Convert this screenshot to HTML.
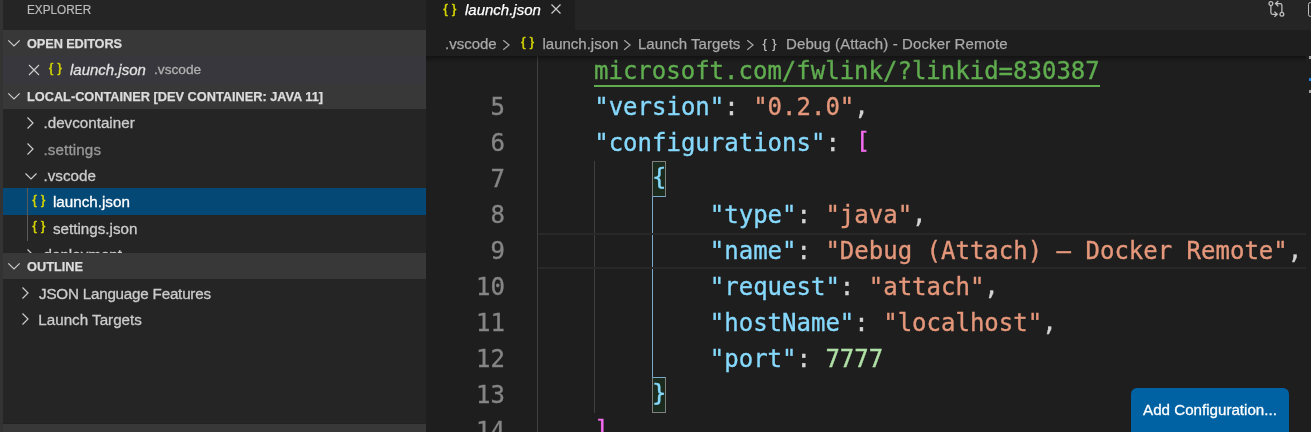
<!DOCTYPE html>
<html>
<head>
<meta charset="utf-8">
<title>launch.json</title>
<style>
html,body{margin:0;padding:0;}
body{width:1311px;height:432px;overflow:hidden;background:#1e1e1e;position:relative;font-family:"Liberation Sans",sans-serif;font-size:15px;color:#cccccc;}
.abs{position:absolute;}
#sidebar,#editor{will-change:transform;}
#activity{left:0;top:0;width:3px;height:432px;background:#333333;}
#sidebar{left:3px;top:0;width:423px;height:432px;background:#252526;overflow:hidden;}
.hdr{position:absolute;left:0;width:423px;height:26.4px;background:#383838;color:#dcdcdc;font-weight:bold;font-size:12.75px;line-height:27px;-webkit-text-stroke:0.25px #dcdcdc;white-space:nowrap;}
.hdr span{position:absolute;left:24px;top:0;}
.row{position:absolute;left:0;width:423px;height:26.4px;line-height:28px;font-size:15.2px;white-space:nowrap;color:#cccccc;}
.row span{position:absolute;top:0;-webkit-text-stroke:0.3px;}
.chev{position:absolute;}
.json{color:#d6d600;font-weight:normal;font-size:12.7px;letter-spacing:4.15px;margin-top:-2.6px;-webkit-text-stroke:0.55px #d6d600 !important;}
#editor{left:426px;top:0;width:885px;height:432px;background:#1e1e1e;overflow:hidden;}
#tabbar{left:0;top:0;width:885px;height:30px;background:#252526;}
#tab{left:0;top:0;width:149px;height:30px;background:#1e1e1e;}
#crumbs{left:0;top:30px;width:885px;height:26px;background:#1e1e1e;color:#a9a9a9;white-space:nowrap;line-height:26px;}
#crumbs span{position:absolute;top:1px;-webkit-text-stroke:0.25px;}
.code{position:absolute;left:0;width:885px;height:36px;line-height:36px;font-family:"DejaVu Sans Mono","Liberation Mono",monospace;font-size:24px;white-space:pre;}
.ln{position:absolute;left:0px;top:-0.2px;width:79px;-webkit-text-stroke:0.35px #858585;text-align:right;color:#858585;}
.tx{position:absolute;left:110.4px;top:0px;color:#d4d4d4;-webkit-text-stroke:0.35px;}
.k{color:#86d9fd;}
.s{color:#e4977a;}
.n{color:#b0e0a6;}
.b1{color:#f56cf0;}
.br{display:inline-block;transform:translateY(-1.1px) scaleY(0.94);}
.bo{transform:translate(1.4px,-1.1px) scaleY(0.94);}
.guide{position:absolute;width:1px;background:#404040;}
</style>
</head>
<body>
<div id="activity" class="abs"></div>

<div id="sidebar" class="abs">
  <div class="abs" style="left:24px;top:0;height:20px;line-height:20px;font-size:13.2px;color:#bbbbbb;white-space:nowrap;transform-origin:0 50%;transform:scaleX(0.893);-webkit-text-stroke:0.2px;">EXPLORER</div>

  <div class="hdr" style="top:30px;"><svg class="chev" style="left:3.2px;top:5px" width="16" height="16" viewBox="0 0 16 16"><path d="M2.3 5.3 L8 11 L13.7 5.3" fill="none" stroke="#cccccc" stroke-width="1.2"/></svg><span style="letter-spacing:-0.1px;">OPEN EDITORS</span></div>

  <div class="row" style="top:56.4px;background:#37373d;">
    <svg class="chev" style="left:24px;top:7px" width="14" height="14" viewBox="0 0 14 14"><path d="M2 2 L12 12 M12 2 L2 12" fill="none" stroke="#cccccc" stroke-width="1.2"/></svg>
    <span class="json" style="left:46.1px;">{}</span>
    <span style="left:67px;font-style:italic;color:#e0e0e0;font-size:15px;">launch.json</span>
    <span style="left:151px;font-size:13.7px;color:#b0b0b0;">.vscode</span>
  </div>

  <div class="hdr" style="top:82.8px;"><svg class="chev" style="left:3.2px;top:5px" width="16" height="16" viewBox="0 0 16 16"><path d="M2.3 5.3 L8 11 L13.7 5.3" fill="none" stroke="#cccccc" stroke-width="1.2"/></svg><span>LOCAL-CONTAINER [DEV CONTAINER: JAVA 11]</span></div>

  <div class="row" style="top:109.2px;">
    <svg class="chev" style="left:19.2px;top:5.6px" width="16" height="16" viewBox="0 0 16 16"><path d="M5.5 2.5 L11 8 L5.5 13.5" fill="none" stroke="#cccccc" stroke-width="1.2"/></svg>
    <span style="left:40.5px;">.devcontainer</span>
  </div>
  <div class="row" style="top:135.6px;">
    <svg class="chev" style="left:19.2px;top:5.6px" width="16" height="16" viewBox="0 0 16 16"><path d="M5.5 2.5 L11 8 L5.5 13.5" fill="none" stroke="#cccccc" stroke-width="1.2"/></svg>
    <span style="left:40.5px;color:#999999;letter-spacing:0.12px;">.settings</span>
  </div>
  <div class="row" style="top:162px;">
    <svg class="chev" style="left:19.6px;top:5.6px" width="16" height="16" viewBox="0 0 16 16"><path d="M2.5 5.5 L8 11 L13.5 5.5" fill="none" stroke="#cccccc" stroke-width="1.2"/></svg>
    <span style="left:40.5px;">.vscode</span>
  </div>
  <div class="row" style="top:188.4px;background:#044876;">
    <span class="json" style="left:29.6px;">{}</span>
    <span style="left:50px;color:#ffffff;">launch.json</span>
  </div>
  <div class="row" style="top:214.8px;">
    <span class="json" style="left:29.6px;">{}</span>
    <span style="left:50px;">settings.json</span>
  </div>
  <div class="row" style="top:241.2px;">
    <svg class="chev" style="left:19.2px;top:5.6px" width="16" height="16" viewBox="0 0 16 16"><path d="M5.5 2.5 L11 8 L5.5 13.5" fill="none" stroke="#cccccc" stroke-width="1.2"/></svg>
    <span style="left:40.5px;">deployment</span>
  </div>
  <div class="abs" style="left:24.4px;top:188.4px;width:1px;height:52.8px;background:#5a5a5a;"></div>

  <div class="hdr" style="top:253px;"><svg class="chev" style="left:3.2px;top:5px" width="16" height="16" viewBox="0 0 16 16"><path d="M2.3 5.3 L8 11 L13.7 5.3" fill="none" stroke="#cccccc" stroke-width="1.2"/></svg><span>OUTLINE</span></div>

  <div class="row" style="top:279.6px;">
    <svg class="chev" style="left:14px;top:5px" width="16" height="16" viewBox="0 0 16 16"><path d="M5.5 2.5 L11 8 L5.5 13.5" fill="none" stroke="#cccccc" stroke-width="1.2"/></svg>
    <span style="left:36px;letter-spacing:-0.21px;">JSON Language Features</span>
  </div>
  <div class="row" style="top:306px;">
    <svg class="chev" style="left:14px;top:5px" width="16" height="16" viewBox="0 0 16 16"><path d="M5.5 2.5 L11 8 L5.5 13.5" fill="none" stroke="#cccccc" stroke-width="1.2"/></svg>
    <span style="left:35.3px;">Launch Targets</span>
  </div>

  <div class="abs" style="left:0;top:422.8px;width:423px;height:1px;background:#222223;"></div>
  <div class="abs" style="left:0;top:423.7px;width:423px;height:9px;background:#383838;"></div>
</div>

<div id="editor" class="abs">
  <!-- code area -->
  <div id="code" class="abs" style="left:0;top:0;width:885px;height:432px;">
    <div class="guide" style="left:111px;top:53px;height:379px;"></div>
    <div class="guide" style="left:168px;top:161px;height:252px;"></div>
    <div class="guide" style="left:226px;top:196px;height:182px;background:#78aacb;"></div>
    <div class="abs" style="left:112px;top:233px;width:768px;height:32px;border-top:2px solid #282828;border-bottom:2px solid #282828;"></div>
    <div class="abs" style="left:226px;top:161px;width:14px;height:36px;background:#1a2a1c;border:1px solid #808080;border-bottom-color:#78aacb;box-sizing:border-box;"></div>
    <div class="abs" style="left:226px;top:377px;width:14px;height:36px;background:#1a2a1c;border:1px solid #808080;border-top-color:#78aacb;box-sizing:border-box;"></div>

    <div class="abs" style="left:168px;top:85px;width:506px;height:2px;background:#60ad50;"></div>
    <div class="code" style="top:53px;"><span class="tx" style="left:168px;color:#60ad50;">microsoft.com/fwlink/?linkid=830387</span></div>
    <div class="code" style="top:89px;"><span class="ln">5</span><span class="tx">    <span class="k">"version"</span>: <span class="s">"0.2.0"</span>,</span></div>
    <div class="code" style="top:125px;"><span class="ln">6</span><span class="tx">    <span class="k">"configurations"</span>: <span class="b1 br bo">[</span></span></div>
    <div class="code" style="top:161px;"><span class="ln">7</span><span class="tx">        <span class="k br">{</span></span></div>
    <div class="code" style="top:197px;"><span class="ln">8</span><span class="tx">            <span class="k">"type"</span>: <span class="s">"java"</span>,</span></div>
    <div class="code" style="top:233px;"><span class="ln">9</span><span class="tx">            <span class="k">"name"</span>: <span class="s">"Debug (Attach) – Docker Remote"</span>,</span></div>
    <div class="code" style="top:269px;"><span class="ln">10</span><span class="tx">            <span class="k">"request"</span>: <span class="s">"attach"</span>,</span></div>
    <div class="code" style="top:305px;"><span class="ln">11</span><span class="tx">            <span class="k">"hostName"</span>: <span class="s">"localhost"</span>,</span></div>
    <div class="code" style="top:341px;"><span class="ln">12</span><span class="tx">            <span class="k">"port"</span>: <span class="n">7777</span></span></div>
    <div class="code" style="top:377px;"><span class="ln">13</span><span class="tx">        <span class="k br">}</span></span></div>
    <div class="code" style="top:413px;"><span class="ln">14</span><span class="tx">    <span class="b1 br">]</span></span></div>
  </div>

  <div id="tabbar" class="abs">
    <div id="tab" class="abs">
      <span class="abs json" style="left:17.5px;top:1.5px;line-height:20px;">{}</span>
      <span class="abs" style="left:39px;top:0;line-height:20px;font-style:italic;color:#ffffff;white-space:nowrap;-webkit-text-stroke:0.25px;">launch.json</span>
      <svg class="abs" style="left:122.8px;top:2px" width="14" height="14" viewBox="0 0 14 14"><path d="M2.5 2.5 L11.5 11.5 M11.5 2.5 L2.5 11.5" fill="none" stroke="#cccccc" stroke-width="1.2"/></svg>
    </div>
    <svg class="abs" style="left:840px;top:0px" width="22" height="20" viewBox="0 0 22 20" fill="none" stroke="#c0c0c0" stroke-width="1.25">
      <circle cx="4.9" cy="3.6" r="1.9"/><circle cx="15.9" cy="14.3" r="1.9"/>
      <path d="M4.9 5.6 V12.6 Q4.9 14.3 6.6 14.3 H11.2 M8.4 11.8 L11.3 14.3 L8.4 16.8"/>
      <path d="M15.9 12.3 V5.3 Q15.9 3.6 14.2 3.6 H9.6 M12.3 1.0 L9.5 3.6 L12.3 6.2"/>
    </svg>
    <div class="abs" style="left:881.8px;top:1.6px;width:8px;height:13px;border:1.3px solid #c0c0c0;border-radius:2.5px;"></div>
  </div>

  <div id="crumbs" class="abs">
    <span style="left:19px;">.vscode</span>
    <span style="left:95.3px;top:1.8px;" class="json">{}</span>
    <span style="left:116.5px;">launch.json</span>
    <span style="left:212px;">Launch Targets</span>
    <span style="left:336.5px;top:0.6px;font-size:13.6px;letter-spacing:5px;color:#c5c5c5;-webkit-text-stroke:0.1px;">{}</span>
    <span style="left:360px;letter-spacing:0.11px;">Debug (Attach) - Docker Remote</span>
    <svg class="abs" style="left:73px;top:7.6px" width="14" height="14" viewBox="0 0 14 14"><path d="M4.2 2.2 L10.1 7 L4.2 11.8" fill="none" stroke="#a9a9a9" stroke-width="1.15"/></svg>
    <svg class="abs" style="left:194.3px;top:7.6px" width="14" height="14" viewBox="0 0 14 14"><path d="M4.2 2.2 L10.1 7 L4.2 11.8" fill="none" stroke="#a9a9a9" stroke-width="1.15"/></svg>
    <svg class="abs" style="left:317px;top:7.6px" width="14" height="14" viewBox="0 0 14 14"><path d="M4.2 2.2 L10.1 7 L4.2 11.8" fill="none" stroke="#a9a9a9" stroke-width="1.15"/></svg>
  </div>
  <div class="abs" style="left:0;top:56px;width:880px;height:7px;background:linear-gradient(rgba(0,0,0,0.38) 0,rgba(0,0,0,0.18) 45%,rgba(0,0,0,0) 100%);"></div>
  <div class="abs" style="left:883px;top:56px;width:2px;height:2.5px;background:#a0a0a0;"></div>
  <div class="abs" style="left:883px;top:78px;width:2px;height:2.5px;background:#1b81d8;"></div>
  <div class="abs" style="left:883px;top:90px;width:2px;height:2.5px;background:#a0a0a0;"></div>

  <div class="abs" style="left:705px;top:388px;width:158px;height:50px;background:#0062a3;border-radius:6px;color:#ffffff;font-size:15.15px;line-height:44.8px;-webkit-text-stroke:0.3px;text-align:center;white-space:nowrap;">Add Configuration...</div>
</div>
</body>
</html>
